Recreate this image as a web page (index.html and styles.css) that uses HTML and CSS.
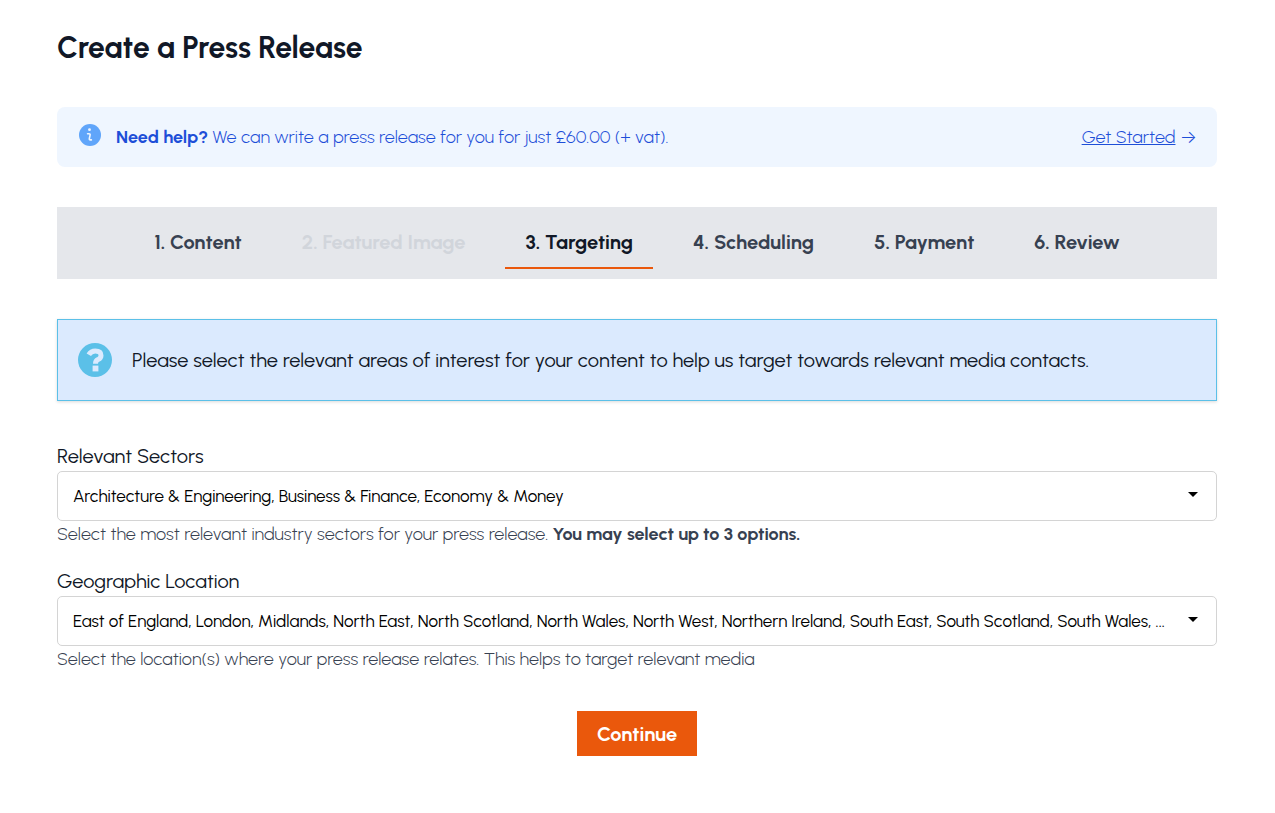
FILE: index.html
```html
<!DOCTYPE html>
<html lang="en">
<head>
  <meta charset="utf-8">
  <meta name="viewport" content="width=device-width, initial-scale=1">
  <title>Create a Press Release</title>
  <link rel="stylesheet" href="styles.css">
</head>
<body>

<main class="container">
  <h1>Create a Press Release</h1>

  <div class="help">
    <svg class="help-icon" viewBox="0 0 22 22" aria-hidden="true">
      <circle cx="11" cy="11" r="11" fill="#60a5fa"/>
      <circle cx="10.5" cy="5.7" r="1.4" fill="#eff6ff"/>
      <path d="M8.6 9.8h1.3q1.5 0 1.200 1.300l-.7 3.100q-.4 1.700 1 1.700h1" fill="none" stroke="#eff6ff" stroke-width="1.6" stroke-linecap="round"/>
    </svg>
    <p><strong>Need help?</strong> We can write a press release for you for just £60.00 (+ vat).</p>
    <p class="help-link"><a href="#">Get Started</a> <span class="arrow">→</span></p>
  </div>

  <nav class="steps">
    <a href="#">1. Content</a>
    <a class="disabled" href="#" aria-disabled="true">2. Featured Image</a>
    <a class="active" href="#" aria-current="step">3. Targeting</a>
    <a href="#">4. Scheduling</a>
    <a href="#">5. Payment</a>
    <a href="#">6. Review</a>
  </nav>

  <div class="notice">
    <svg class="notice-icon" viewBox="0 0 34 34" aria-hidden="true">
      <circle cx="17" cy="17" r="17" fill="#5bc0e8"/>
      <path d="M10.800 11.800Q13 8 17.300 8Q23 8 23 12.400Q23 15 20 16.600Q17.500 17.800 17.500 20.800" fill="none" stroke="#dbeafe" stroke-width="5"/>
      <rect x="14.600" y="22.600" width="5.800" height="5.800" fill="#dbeafe"/>
    </svg>
    <p>Please select the relevant areas of interest for your content to help us target towards relevant media contacts.</p>
  </div>

  <form action="#">
    <div class="field">
      <label for="sectors">Relevant Sectors</label>
      <div class="select">
        <select id="sectors" name="sectors">
          <option>Architecture &amp; Engineering, Business &amp; Finance, Economy &amp; Money</option>
        </select>
      </div>
      <p class="hint">Select the most relevant industry sectors for your press release. <strong>You may select up to 3 options.</strong></p>
    </div>

    <div class="field">
      <label for="location">Geographic Location</label>
      <div class="select">
        <select id="location" name="location">
          <option>East of England, London, Midlands, North East, North Scotland, North Wales, North West, Northern Ireland, South East, South Scotland, South Wales, ...</option>
        </select>
      </div>
      <p class="hint">Select the location(s) where your press release relates. This helps to target relevant media</p>
    </div>

    <button type="submit">Continue</button>
  </form>
</main>

</body>
</html>
```

FILE: styles.css
```css
* {
  box-sizing: border-box;
}

body {
  margin: 0;
  background: #fff;
  color: #111827;
  font-family: Urbanist, Lato, sans-serif;
  font-size: 20px;
  font-weight: 400;
  line-height: 30px;
}

h1, p {
  margin: 0;
}

.container {
  padding: 29px 58px 28px 57px;
}

h1 {
  margin-bottom: 40px;
  font-size: 30px;
  font-weight: 700;
  line-height: 38px;
}

.help {
  display: flex;
  align-items: center;
  height: 60px;
  padding: 0 20px 0 22px;
  border-radius: 8px;
  background: #eff6ff;
  color: #1d4ed8;
  font-size: 18px;
  font-weight: 300;
}

.help-icon {
  width: 22px;
  height: 22px;
  margin: 0 15px 4px 0;
}

.help strong, .hint strong {
  font-weight: 700;
}

.help-link {
  margin-left: auto;
}

.help a {
  color: inherit;
}

.arrow {
  font-family: Inter, sans-serif;
}

.steps {
  display: flex;
  justify-content: center;
  gap: 20px;
  margin: 40px 0;
  padding: 10px;
  background: #e5e7eb;
}

.steps a {
  padding: 10px 20px;
  border-bottom: 2px solid transparent;
  color: #374151;
  font-weight: 700;
  text-decoration: none;
}

.steps .disabled {
  color: #d1d5db;
}

.steps .active {
  border-color: #ea580c;
  color: #111827;
}

.notice {
  display: flex;
  align-items: center;
  gap: 20px;
  padding: 25px 20px;
  border: 1px solid #5bc0e8;
  background: #dbeafe;
  box-shadow: 0 1px 3px rgba(0, 0, 0, 0.15);
}

.notice-icon {
  flex: none;
  width: 34px;
  height: 34px;
  margin: -2px 0;
}

form {
  margin-top: 40px;
}

.field {
  margin-bottom: 18px;
}

.field label {
  display: block;
}

.select {
  position: relative;
}

.select::after {
  content: "";
  position: absolute;
  top: 21px;
  right: 19px;
  border: 5px solid transparent;
  border-top-color: #000;
  border-bottom: 0;
  pointer-events: none;
}

select {
  display: block;
  width: 100%;
  height: 50px;
  padding: 0 15px;
  border: 1px solid #d4d4d4;
  border-radius: 5px;
  background: #fff;
  color: #000;
  font: inherit;
  font-size: 17px;
  appearance: none;
}

.hint {
  color: #374151;
  font-size: 18px;
  font-weight: 300;
  line-height: 27px;
}

button {
  display: block;
  margin: 38px auto 0;
  padding: 9px 20px 7px;
  border: 0;
  background: #ea580c;
  color: #fff;
  font: inherit;
  font-weight: 700;
  line-height: 29px;
  cursor: pointer;
}
```
